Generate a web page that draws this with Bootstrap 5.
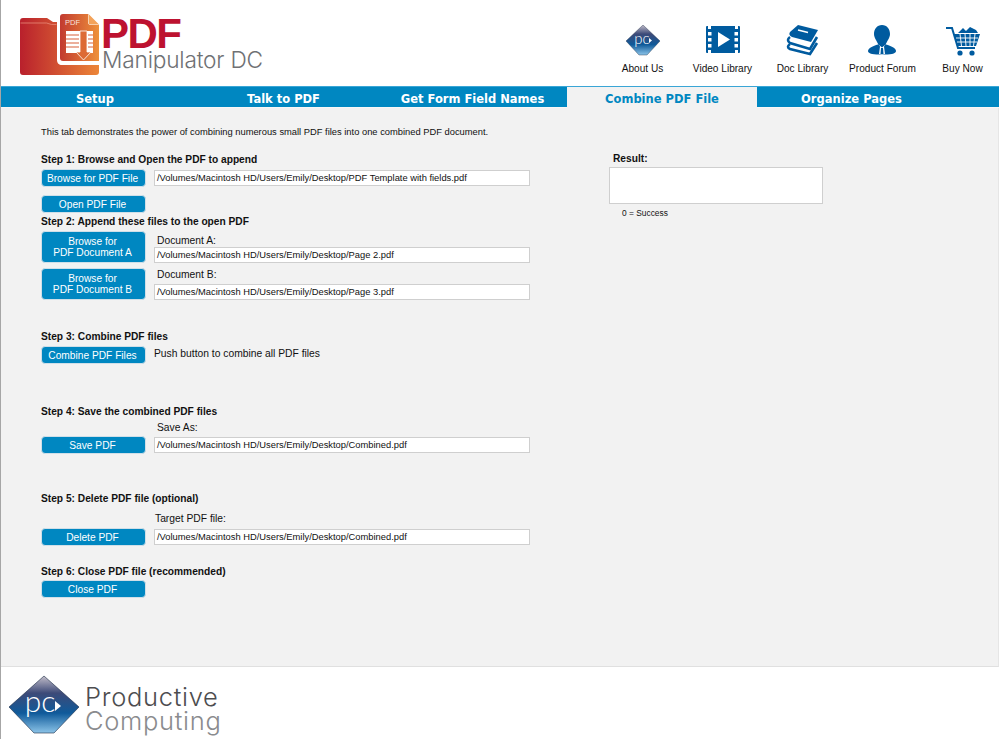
<!DOCTYPE html>
<html lang="en"><head><meta charset="utf-8"><title>PDF Manipulator DC</title>
<link href="https://cdn.jsdelivr.net/npm/bootstrap@5.3.0/dist/css/bootstrap.min.css" rel="stylesheet">
<style>
html,body{height:739px;overflow:hidden;background:#fff}
body{font-family:"Liberation Sans",Arial,sans-serif;color:#111;font-size:10.3px;line-height:1}
.app-shell{width:999px;height:739px;border-left:1px solid #a6a6a6;display:flex;flex-direction:column;background:#fff}
.top-head{height:86px;flex:none;padding-left:19px}
.logo-mark{margin-top:13px;flex:none}
.brand-wrap{width:170px;padding-top:17px;margin-left:-1px}
.brand-pdf{font-size:42px;font-weight:700;color:#bd1230;line-height:34px;letter-spacing:-1.5px;height:34px}
.brand-sub{font-family:"Inter",sans-serif;font-weight:300;font-size:22.7px;line-height:26px;color:#6f7174;letter-spacing:-.2px;margin-top:-4px;margin-left:1px;white-space:nowrap}
.nav-tool{width:80px;padding-top:25px;color:#111;font-size:10.1px;text-decoration:none;text-align:center}
.nav-tool svg{display:block;margin:0 auto 6px}
.tool-row{margin-right:-3.5px}
.tab-strip{height:22px;flex:none;background:#0087c1;border-top:1px solid #3aa6d6;border-bottom:1px solid #f7f7f7}
.tab-item{width:189px;text-align:center;font-weight:700;line-height:24px;font-family:"DejaVu Sans",sans-serif;color:#fff;font-size:11.5px}
.tab-first{width:188px}
.tab-item.on{width:190px;background:#f2f2f2;color:#0087c1;margin-bottom:-1px}
.work-pane{flex:1;background:#f2f2f2;border-bottom:1px solid #e0e0e0;border-right:1px solid #e6e6e6;padding-left:40px;min-height:0}
.form-col{width:490px;flex:none}
.intro-line{margin-top:19px;height:11px;line-height:11px;font-size:9.35px}
.step-title{font-weight:700;font-size:10.2px;line-height:12px;height:12px}
.pdf-btn{width:105px;height:18px;padding:0 2px 0 0;flex:none;background:#0087c1;border:1px solid #d0dfe8;border-radius:4px;color:#fff;font-size:10.2px;line-height:11px;box-shadow:none}
.pdf-btn.tall{height:32px}
.pdf-btn:hover{background:#0087c1;color:#fff}
.path-box{display:block;width:376px;height:16px;background:#fff;border:1px solid #cfcfcf;font-size:9.35px;line-height:15px;padding:0 2px;color:#111;white-space:nowrap;overflow:hidden}
.gap-col{margin-left:8px}
.field-label{font-size:10.3px;line-height:12px;height:12px}
.s1{margin-top:16px}.s1b{margin-top:3px}.s1c{margin-top:8px}
.s2{margin-top:3px}.s2b{margin-top:3px}.s2c{margin-top:5px}
.s3{margin-top:31px}.s3b{margin-top:3px}
.s4{margin-top:42px}.s4b{margin-top:4px}.s4c{margin-top:2px}
.s5{margin-top:39px}.s5b{margin-top:8px}.s5c{margin-top:3px}
.s6{margin-top:20px}.s6b{margin-top:2px}
.col-a{padding-top:4px}.col-b{padding-top:1px}.lbl-b{margin-bottom:3px}
.lbl-doc{margin-left:3px}
.push-up{margin-bottom:2px}
.lbl-save{margin-left:116px}.lbl-target{margin-left:114px}
.result-col{margin-left:78px;padding-top:45px;width:220px}
.result-title{font-weight:700;font-size:10.2px;line-height:12px;margin-left:4px}
.result-box{width:214px;height:37px;background:#fff;border:1px solid #cfcfcf;margin-top:2px}
.result-note{font-size:8.4px;line-height:10px;margin:4px 0 0 13px}
.foot-bar{height:72px;flex:none;padding-left:7px;background:#fff}
.foot-mark{margin-top:4px;flex:none}
.pc-name{font-family:"Inter",sans-serif;font-weight:300;font-size:25.5px;line-height:24px;letter-spacing:.7px;margin-left:5px;padding-top:11px}
.pc-a{color:#4d4d4f}.pc-b{color:#8a8b8e}
</style></head>
<body>
<div class="app-shell">
 <header class="top-head d-flex justify-content-between">
  <div class="d-flex">
   <svg class="logo-mark" width="82" height="63" viewBox="0 0 82 63">
    <defs><linearGradient id="lg" x1="0" x2="1" y1="0" y2="0"><stop offset="0" stop-color="#b9202c"/><stop offset="1" stop-color="#ec8638"/></linearGradient>
    <linearGradient id="lg2" x1="0" x2="1" y1="0" y2="0"><stop offset="0" stop-color="#c23a30"/><stop offset="1" stop-color="#ee913a"/></linearGradient></defs>
    <path d="M3 5h24l6 4h4v38c0 3 2 5 5 5h37v7a3 3 0 0 1-3 3H3a3 3 0 0 1-3-3V8a3 3 0 0 1 3-3z" fill="url(#lg)"/>
    <path d="M0.500 10h26l5 1.500h5" fill="none" stroke="#e88a78" stroke-width=".8"/>
    <path d="M43 1h25l11 11v36H43a3 3 0 0 1-3-3V4a3 3 0 0 1 3-3z" fill="url(#lg2)"/>
    <path d="M68 1v8a3 3 0 0 0 3 3h8z" fill="#fff"/>
    <path d="M68.500 1l10.500 10.500h-8a2.500 2.500 0 0 1-2.500-2.500z" fill="#f3a35a"/>
    <text x="45" y="11.500" font-family="Liberation Sans" font-size="7.500" fill="#fff" fill-opacity=".85">PDF</text>
    <rect x="46" y="18" width="27" height="22" fill="#fff"/>
    <path d="M46 22h13M46 26h13M46 30h13M46 34h13M68 22h5M68 26h5M68 30h5M68 34h5" stroke="#d8613a" stroke-width="1.200"/>
    <path d="M60 18h7v21h4l-7.500 8-7.500-8h4z" fill="#dd6a35" stroke="#fff" stroke-width=".8"/>
   </svg>
   <div class="brand-wrap">
    <div class="brand-pdf">PDF</div>
    <div class="brand-sub">Manipulator DC</div>
   </div>
  </div>
  <nav class="d-flex tool-row">
   <a class="nav-tool" href="#">
    <svg width="36" height="33" viewBox="0 0 36 33"><defs><linearGradient id="g1" x1="0" x2="0" y1="0" y2="1"><stop offset="0" stop-color="#c2bdc9"/><stop offset=".3" stop-color="#3d4a78"/><stop offset=".65" stop-color="#0f5a9a"/><stop offset="1" stop-color="#8cc4e8"/></linearGradient></defs><path d="M18 0l17 16-13 14h-8L1 16z" fill="url(#g1)" stroke="#1a2a44" stroke-width=".4"/><text x="17" y="19" text-anchor="middle" font-family="Lato" font-weight="300" font-size="15" fill="#fff">pc</text><path d="M24 13l3 2.500-3 2.500z" fill="#fff"/></svg>
    About Us</a>
   <a class="nav-tool" href="#">
    <svg width="36" height="33" viewBox="0 0 36 33"><rect x="1" y="1" width="34" height="27" rx="1" fill="#005b9f"/><path d="M3 1h3v3H3zM30 1h3v3h-3zM3 7h3.500v3.500H3zM3 13h3.500v3.500H3zM3 19h3.500v3.500H3zM29.500 7H33v3.500h-3.500zM29.500 13H33v3.500h-3.500zM29.500 19H33v3.500h-3.500zM3 25h3v3H3zM30 25h3v3h-3z" fill="#fff"/><path d="M13 7l12 7.500L13 22z" fill="#fff"/></svg>
    Video Library</a>
   <a class="nav-tool" href="#">
    <svg width="36" height="33" viewBox="0 0 36 33"><path d="M13 0l20 5-7 12L7 12Q3 10 5 7z" fill="#005b9f"/><path d="M13 5l10 2.500" stroke="#fff" stroke-width="1.600"/><path d="M5 12Q1 15 5 18l20 6 7-12" fill="none" stroke="#005b9f" stroke-width="2.600"/><path d="M5 19Q1 22 5 24l20 5 7-11" fill="none" stroke="#005b9f" stroke-width="2.600"/></svg>
    Doc Library</a>
   <a class="nav-tool" href="#">
    <svg width="36" height="33" viewBox="0 0 36 33"><path d="M17 0c5 0 8 4 8 9 0 4-3 7-4.500 11h-7C12 16 9 13 9 9c0-5 3-9 8-9z" fill="#005b9f"/><path d="M3 26c0-3 5-5 10-6.500h8C26 21 31 23 31 26s-6 3.500-14 3.500S3 29 3 26z" fill="#005b9f"/><path d="M13.500 19.500l3.500 3 3.500-3-1.500 2 1 7.500-3 .5-3-.5 1-7.500z" fill="#fff"/><path d="M16 23h2l.5 6h-3z" fill="#005b9f"/></svg>
    Product Forum</a>
   <a class="nav-tool" href="#">
    <svg width="36" height="33" viewBox="0 0 36 33"><path d="M1 3h6l6 20h17" fill="none" stroke="#005b9f" stroke-width="2"/><path d="M9 9h26l-4 12H12z" fill="#005b9f"/><path d="M11 13h22M12 17h20M15 9l1.500 12M20 9l1 12M25 9v12M30 9l-1.500 12" stroke="#fff" stroke-width=".9"/><path d="M13 8l5-5 3 3 4-4 6 3 2 3z" fill="#005b9f"/><circle cx="15" cy="28" r="2.600" fill="#005b9f"/><circle cx="27" cy="28" r="2.600" fill="#005b9f"/></svg>
    Buy Now</a>
  </nav>
 </header>
 <div class="tab-strip d-flex">
  <div class="tab-item tab-first">Setup</div><div class="tab-item">Talk to PDF</div><div class="tab-item">Get Form Field Names</div><div class="tab-item on">Combine PDF File</div><div class="tab-item">Organize Pages</div>
 </div>
 <main class="work-pane d-flex">
  <div class="form-col">
   <p class="intro-line mb-0">This tab demonstrates the power of combining numerous small PDF files into one combined PDF document.</p>
   <div class="step-title s1">Step 1: Browse and Open the PDF to append</div>
   <div class="d-flex align-items-center s1b"><button class="btn pdf-btn">Browse for PDF File</button><span class="path-box gap-col">/Volumes/Macintosh HD/Users/Emily/Desktop/PDF Template with fields.pdf</span></div>
   <button class="btn pdf-btn d-block s1c">Open PDF File</button>
   <div class="step-title s2">Step 2: Append these files to the open PDF</div>
   <div class="d-flex s2b"><button class="btn pdf-btn tall">Browse for<br>PDF Document A</button><div class="gap-col col-a"><div class="field-label lbl-doc">Document A:</div><span class="path-box">/Volumes/Macintosh HD/Users/Emily/Desktop/Page 2.pdf</span></div></div>
   <div class="d-flex s2c"><button class="btn pdf-btn tall">Browse for<br>PDF Document B</button><div class="gap-col col-b"><div class="field-label lbl-doc lbl-b">Document B:</div><span class="path-box">/Volumes/Macintosh HD/Users/Emily/Desktop/Page 3.pdf</span></div></div>
   <div class="step-title s3">Step 3: Combine PDF files</div>
   <div class="d-flex align-items-center s3b"><button class="btn pdf-btn">Combine PDF Files</button><span class="field-label gap-col ms-2 push-up">Push button to combine all PDF files</span></div>
   <div class="step-title s4">Step 4: Save the combined PDF files</div>
   <div class="field-label s4b lbl-save">Save As:</div>
   <div class="d-flex align-items-center s4c"><button class="btn pdf-btn">Save PDF</button><span class="path-box gap-col">/Volumes/Macintosh HD/Users/Emily/Desktop/Combined.pdf</span></div>
   <div class="step-title s5">Step 5: Delete PDF file (optional)</div>
   <div class="field-label s5b lbl-target">Target PDF file:</div>
   <div class="d-flex align-items-center s5c"><button class="btn pdf-btn">Delete PDF</button><span class="path-box gap-col">/Volumes/Macintosh HD/Users/Emily/Desktop/Combined.pdf</span></div>
   <div class="step-title s6">Step 6: Close PDF file (recommended)</div>
   <button class="btn pdf-btn d-block s6b">Close PDF</button>
  </div>
  <aside class="result-col">
   <div class="result-title">Result:</div>
   <div class="result-box"></div>
   <div class="result-note">0 = Success</div>
  </aside>
 </main>
 <footer class="foot-bar d-flex align-items-center">
  <svg class="foot-mark" width="72" height="60" viewBox="0 0 72 60"><defs><linearGradient id="g2" x1="0" x2="0" y1="0" y2="1"><stop offset="0" stop-color="#c2bdc9"/><stop offset=".3" stop-color="#3d4a78"/><stop offset=".65" stop-color="#0f5a9a"/><stop offset="1" stop-color="#8cc4e8"/></linearGradient></defs><path d="M36 1l35 31-25 26H26L1 32z" fill="url(#g2)" stroke="#1a2a44" stroke-width=".6"/><text x="32" y="37" text-anchor="middle" font-family="Lato" font-weight="300" font-size="30" fill="#fff">pc</text><path d="M47 26l6 5-6 5z" fill="#fff"/></svg>
  <div class="pc-name"><div class="pc-a">Productive</div><div class="pc-b">Computing</div></div>
 </footer>
</div>
</body></html>
